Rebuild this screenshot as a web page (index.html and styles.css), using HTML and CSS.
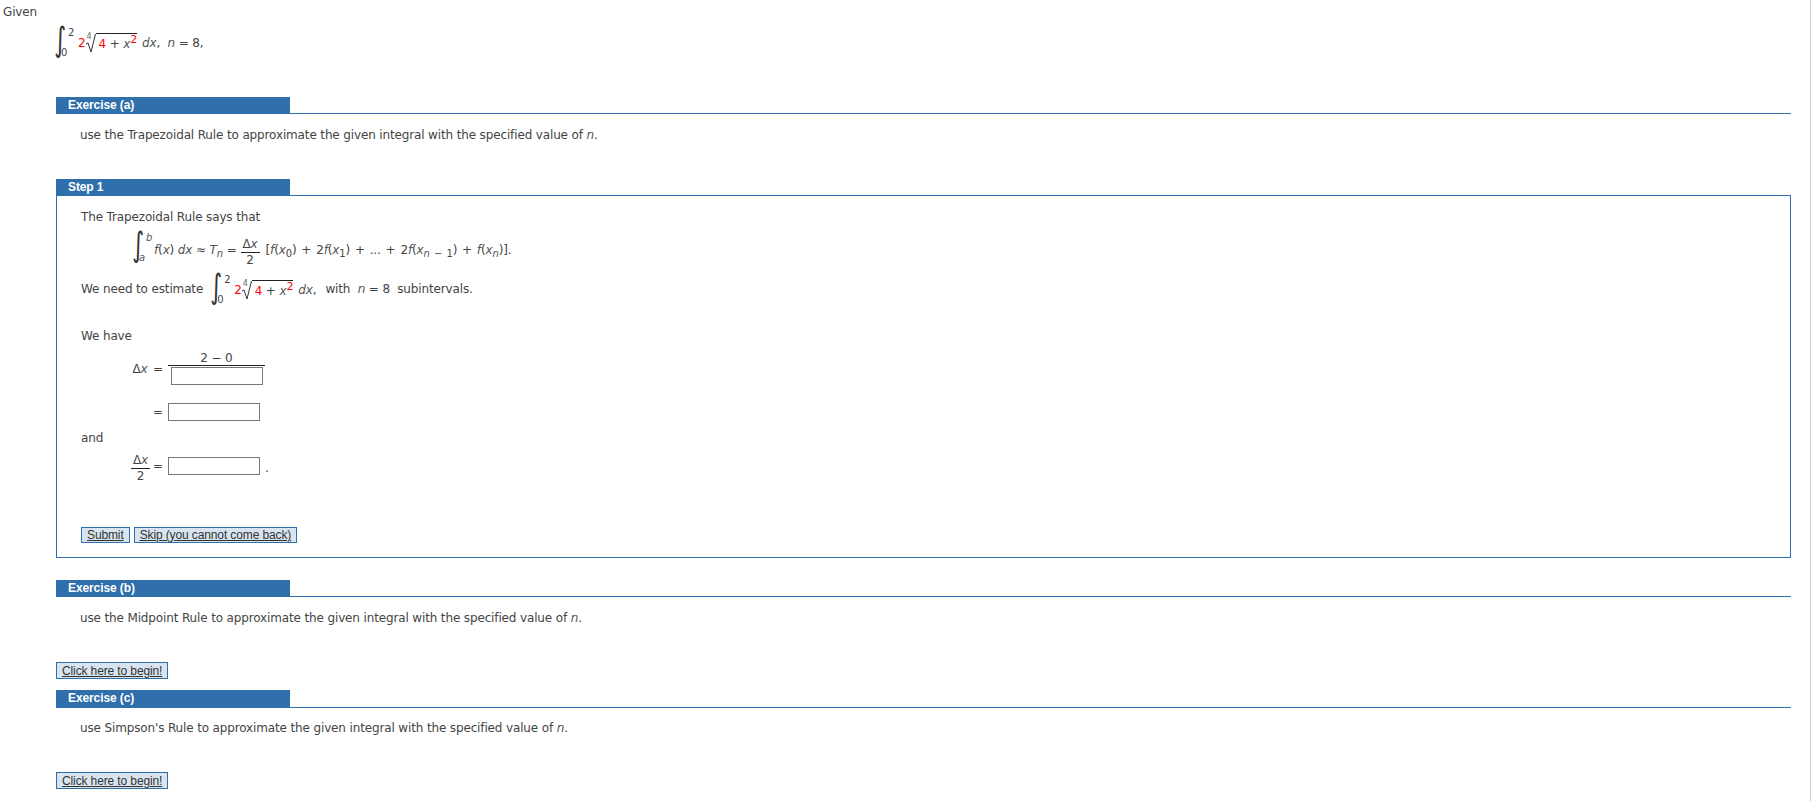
FILE: index.html
```html
<!DOCTYPE html>
<html lang="en">
<head>
    <meta charset="UTF-8">
    <title>Trapezoidal Rule</title>
    <link rel="stylesheet" href="styles.css">
</head>
<body>
    <div class="given-label">Given</div>
    <div class="given-math">
        <span class="integral"><span class="int-sign">∫</span><span class="limits"><span class="upper">2</span><span class="lower">0</span></span></span>
        <span class="red">2</span><span class="radical"><span class="index">4</span><svg class="root-sign" width="10" height="20" viewBox="0 0 10 20"><path d="M0 11 L2 10 L5 19 L9.5 1" fill="none" stroke="#333" stroke-width="1"/></svg><span class="radicand"><span class="red">4</span> + <i>x</i><sup class="red">2</sup></span></span>
        <span class="after-root"><i>dx</i>,&nbsp; <i>n</i> = 8,</span>
    </div>

    <div class="exercises">
        <div class="section-head first"><span class="section-title">Exercise (a)</span></div>
        <p class="exercise-text">use the Trapezoidal Rule to approximate the given integral with the specified value of <i>n</i>.</p>

        <div class="section-head step-head"><span class="section-title">Step 1</span></div>
        <div class="step-box">
            <div class="line">The Trapezoidal Rule says that</div>
            <div class="formula">
                <span class="integral"><span class="int-sign">∫</span><span class="limits"><span class="upper"><i>b</i></span><span class="lower"><i>a</i></span></span></span>
                <span class="formula-text"><i>f</i>(<i>x</i>) <i>dx</i> ≈ <i>T<sub>n</sub></i> =</span>
                <span class="fraction small-frac"><span class="num">Δ<i>x</i></span><span class="den">2</span></span>
                <span class="formula-text formula-sum">[<i>f</i>(<i>x</i><sub>0</sub>) + 2<i>f</i>(<i>x</i><sub>1</sub>) + ... + 2<i>f</i>(<i>x<sub>n</sub></i><sub> − 1</sub>) + <i>f</i>(<i>x<sub>n</sub></i>)].</span>
            </div>
            <div class="estimate">
                <span class="estimate-text">We need to estimate</span>
                <span class="estimate-math">
                    <span class="integral"><span class="int-sign">∫</span><span class="limits"><span class="upper">2</span><span class="lower">0</span></span></span>
                    <span class="red">2</span><span class="radical"><span class="index">4</span><svg class="root-sign" width="10" height="20" viewBox="0 0 10 20"><path d="M0 11 L2 10 L5 19 L9.5 1" fill="none" stroke="#333" stroke-width="1"/></svg><span class="radicand"><span class="red">4</span> + <i>x</i><sup class="red">2</sup></span></span>
                    <span class="after-root"><i>dx</i>,</span>
                </span>
                <span class="estimate-text estimate-tail">with&nbsp; <i>n</i> = 8&nbsp; subintervals.</span>
            </div>

            <div class="line we-have">We have</div>
            <div class="calc calc-first">
                <span class="calc-left">Δ<i>x</i></span>
                <span class="calc-eq">=</span>
                <span class="fraction wide-frac"><span class="num">2 − 0</span><span class="den"><input class="answer" type="text"></span></span>
            </div>
            <div class="calc calc-second">
                <span class="calc-left"></span>
                <span class="calc-eq">=</span>
                <input class="answer" type="text">
            </div>
            <div class="line and-line">and</div>
            <div class="calc calc-third">
                <span class="calc-left"><span class="fraction small-frac"><span class="num">Δ<i>x</i></span><span class="den">2</span></span></span>
                <span class="calc-eq">=</span>
                <input class="answer" type="text">
                <span class="period">.</span>
            </div>

            <div class="step-buttons">
                <button class="btn" type="button">Submit</button>
                <button class="btn" type="button">Skip (you cannot come back)</button>
            </div>
        </div>

        <div class="section-head after-step"><span class="section-title">Exercise (b)</span></div>
        <p class="exercise-text">use the Midpoint Rule to approximate the given integral with the specified value of <i>n</i>.</p>
        <button class="btn begin" type="button">Click here to begin!</button>

        <div class="section-head after-begin"><span class="section-title">Exercise (c)</span></div>
        <p class="exercise-text">use Simpson's Rule to approximate the given integral with the specified value of <i>n</i>.</p>
        <button class="btn begin" type="button">Click here to begin!</button>
    </div>
</body>
</html>
```

FILE: styles.css
```css
html, body {
    margin: 0;
    padding: 0;
    background-color: #fff;
}

html {
    overflow: hidden;
}

body {
    box-sizing: border-box;
    width: 1811px;
    height: 100vh;
    overflow: hidden;
    padding-top: 4px;
    border-right: 1px solid #ccc;
    font-family: "DejaVu Sans", sans-serif;
    font-size: 12px;
    line-height: 16px;
    color: #444;
    letter-spacing: -0.14px;
}

.given-label {
    padding-left: 3px;
}

.given-math {
    display: flex;
    align-items: center;
    height: 32px;
    margin: 7px 0 0 54px;
    white-space: pre;
}

.integral {
    display: inline-flex;
    height: 32px;
    width: 24px;
}

.int-sign {
    display: block;
    width: 11px;
    height: 32px;
    font-size: 24px;
    line-height: 32px;
    color: #333;
    transform: translateY(-3px) scale(0.95, 1.4);
}

.limits {
    display: flex;
    flex-direction: column;
    justify-content: space-between;
    font-size: 10px;
    line-height: 12px;
}

.upper {
    margin-left: 3px;
}

.lower {
    margin-left: -4px;
}

.red {
    color: #f00;
}

.radical {
    display: inline-flex;
    align-items: flex-start;
}

.index {
    margin-top: 0;
    width: 0;
    font-size: 8px;
    line-height: 8px;
    color: #666;
    transform: translateX(1px);
}

.radicand {
    border-top: 1px solid #222;
    padding: 1px 0 0 3px;
    line-height: 19px;
}

.radicand sup {
    font-size: 11px;
    line-height: 0;
}

.after-root {
    margin-left: 5px;
}

i {
    color: #555;
}

sub {
    font-size: 10px;
    line-height: 0;
}

.exercises {
    margin: 0 19px 0 56px;
}

.section-head {
    box-sizing: border-box;
    height: 17px;
    border-bottom: 1px solid #2f6fab;
}

.section-title {
    display: block;
    box-sizing: border-box;
    width: 234px;
    height: 17px;
    padding-left: 12px;
    background-color: #2f6fab;
    color: #fff;
    font-family: "Liberation Sans", sans-serif;
    font-size: 12px;
    font-weight: bold;
    line-height: 17px;
    letter-spacing: -0.1px;
}

.first {
    margin-top: 38px;
}

.exercise-text {
    margin: 13px 0 0;
    padding-left: 24px;
}

.step-head {
    margin-top: 36px;
}

.step-box {
    box-sizing: border-box;
    height: 362px;
    padding: 13px 0 0 24px;
    border: 1px solid #2f6fab;
    border-top: none;
}

.line {
    height: 16px;
}

.formula {
    display: flex;
    align-items: center;
    height: 32px;
    margin: 7px 0 0 51px;
    white-space: pre;
}

.integral + .formula-text {
    margin-left: -2px;
}

.formula-text {
    margin: 4px 4px 0 0;
}

.formula-sum {
    word-spacing: 1.2px;
}

.fraction {
    display: inline-flex;
    flex-direction: column;
    align-items: center;
}

.small-frac {
    width: 19px;
    margin: 0 6px 0 0;
    line-height: 15px;
}

.formula .small-frac {
    margin-top: 8px;
}

.small-frac .num {
    width: 100%;
    text-align: center;
    border-bottom: 1px solid #222;
}

.estimate {
    display: flex;
    align-items: center;
    height: 34px;
    margin-top: 9px;
    white-space: pre;
}

.estimate-text {
    margin-bottom: 2px;
}

.estimate-math {
    display: flex;
    align-items: center;
    margin-left: 7px;
}

.estimate-tail {
    margin-left: 9px;
}

.we-have {
    margin-top: 21px;
}

.calc {
    display: flex;
    align-items: flex-end;
    padding-left: 50px;
}

.calc-left {
    width: 22px;
    text-align: center;
    box-sizing: border-box;
    padding-right: 4px;
}

.calc-eq {
    width: 15px;
}

.calc-first {
    margin-top: 6px;
}

.calc-first .calc-left, .calc-first .calc-eq {
    margin-bottom: 8px;
}

.wide-frac {
    width: 97px;
}

.wide-frac .num {
    width: 100%;
    text-align: center;
    height: 15px;
    line-height: 17px;
    border-bottom: 1px solid #222;
}

.wide-frac .den {
    height: 18px;
    margin-top: 1px;
}

.answer {
    box-sizing: border-box;
    display: block;
    width: 92px;
    height: 18px;
    margin: 0;
    padding: 0;
    border: 1px solid #767676;
    background-color: #fff;
}

.calc-second {
    margin-top: 18px;
    align-items: center;
}

.and-line {
    margin-top: 9px;
}

.calc-third {
    margin-top: 7px;
    align-items: center;
    height: 30px;
}

.calc-third .small-frac {
    margin: 0;
}

.calc-third .calc-left {
    padding-right: 3px;
}

.calc-third .calc-eq {
    margin-bottom: 4px;
}

.calc-third .answer {
    margin-bottom: 4px;
}

.period {
    margin-left: 5px;
}

.step-buttons {
    display: flex;
    gap: 4px;
    margin-top: 44px;
}

.btn {
    box-sizing: border-box;
    display: block;
    height: 16px;
    margin: 0;
    padding: 0 5px;
    border: 1px solid #2f6fab;
    border-radius: 0;
    background-color: #d8e4f0;
    color: #333;
    font-family: "Liberation Sans", sans-serif;
    font-size: 12px;
    line-height: 14px;
    letter-spacing: -0.12px;
    text-decoration: underline;
}

.after-step {
    margin-top: 22px;
}

.begin {
    height: 17px;
    margin-top: 36px;
}

.after-begin {
    margin-top: 11px;
    height: 18px;
}

.after-begin .section-title {
    height: 18px;
}

.after-begin + .exercise-text {
    margin-top: 12px;
}
```
